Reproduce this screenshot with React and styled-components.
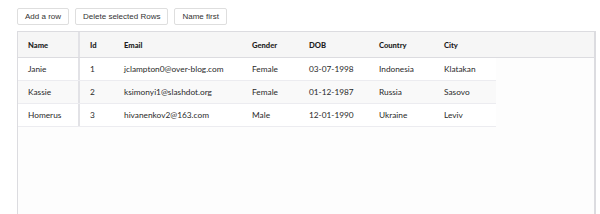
import React from 'react';
import styled, { createGlobalStyle } from 'styled-components';

const rows = [
    { name: 'Janie', id: 1, email: 'jclampton0@over-blog.com', gender: 'Female', dob: '03-07-1998', country: 'Indonesia', city: 'Klatakan' },
    { name: 'Kassie', id: 2, email: 'ksimonyi1@slashdot.org', gender: 'Female', dob: '01-12-1987', country: 'Russia', city: 'Sasovo' },
    { name: 'Homerus', id: 3, email: 'hivanenkov2@163.com', gender: 'Male', dob: '12-01-1990', country: 'Ukraine', city: 'Leviv' },
];

const columns = [
    { key: 'id', title: 'Id', width: 34 },
    { key: 'email', title: 'Email', width: 128 },
    { key: 'gender', title: 'Gender', width: 57 },
    { key: 'dob', title: 'DOB', width: 70 },
    { key: 'country', title: 'Country', width: 65 },
    { key: 'city', title: 'City', width: 61 },
];

const App = () => {
    return (
        <>
            <GlobalStyle />
            <Page>
                <Toolbar>
                    <Button>Add a row</Button>
                    <Button>Delete selected Rows</Button>
                    <Button>Name first</Button>
                </Toolbar>
                <Grid>
                    <HeaderRow>
                        <PinnedCell>Name</PinnedCell>
                        {columns.map(col => (
                            <Cell key={col.key} width={col.width}>{col.title}</Cell>
                        ))}
                    </HeaderRow>
                    {rows.map((row, i) => (
                        <Row key={row.id} odd={i % 2 === 1}>
                            <PinnedCell>{row.name}</PinnedCell>
                            {columns.map(col => (
                                <Cell key={col.key} width={col.width}>{row[col.key]}</Cell>
                            ))}
                        </Row>
                    ))}
                </Grid>
            </Page>
        </>
    );
}

const GlobalStyle = createGlobalStyle`
    body {
        margin: 0;
        background: #fff;
        overflow: hidden;
    }
`;

const Page = styled.div`
    padding: 8px 4px 0 17px;
`;

const Toolbar = styled.div`
    display: flex;
    gap: 6px;
    margin-bottom: 6px;
`;

const Button = styled.button`
    height: 17px;
    padding: 0 7px;
    font-family: "Liberation Sans", Arial, sans-serif;
    font-size: 8px;
    color: #333;
    background: #fff;
    border: 1px solid #dedede;
    border-radius: 2px;
    cursor: pointer;
`;

const Grid = styled.div`
    height: 200px;
    border: 1px solid #dcdce0;
    border-right-width: 2px;
    background: #fdfdfd;
    font-family: Lato, "Open Sans", sans-serif;
    color: #2a2a2a;
`;

const HeaderRow = styled.div`
    display: flex;
    height: 25px;
    align-items: stretch;
    background: #f6f6f6;
    border-bottom: 1px solid #dcdce0;
    font-weight: 900;
    font-size: 7.6px;
    color: #1e1e1e;
`;

const Row = styled.div`
    display: flex;
    width: 478px;
    height: 22px;
    background: ${p => (p.odd ? '#f9f9f9' : '#fff')};
    border-bottom: 1px solid #ececf0;
    font-size: 8.3px;
`;

const PinnedCell = styled.div`
    display: flex;
    align-items: center;
    width: 50px;
    padding-left: 10px;
    border-right: 2px solid #e2e2e6;
    flex-shrink: 0;
    white-space: nowrap;
`;

const Cell = styled.div`
    display: flex;
    align-items: center;
    width: ${p => p.width}px;
    padding-left: 10px;
    box-sizing: border-box;
    flex-shrink: 0;
    white-space: nowrap;
`;

export default App;
